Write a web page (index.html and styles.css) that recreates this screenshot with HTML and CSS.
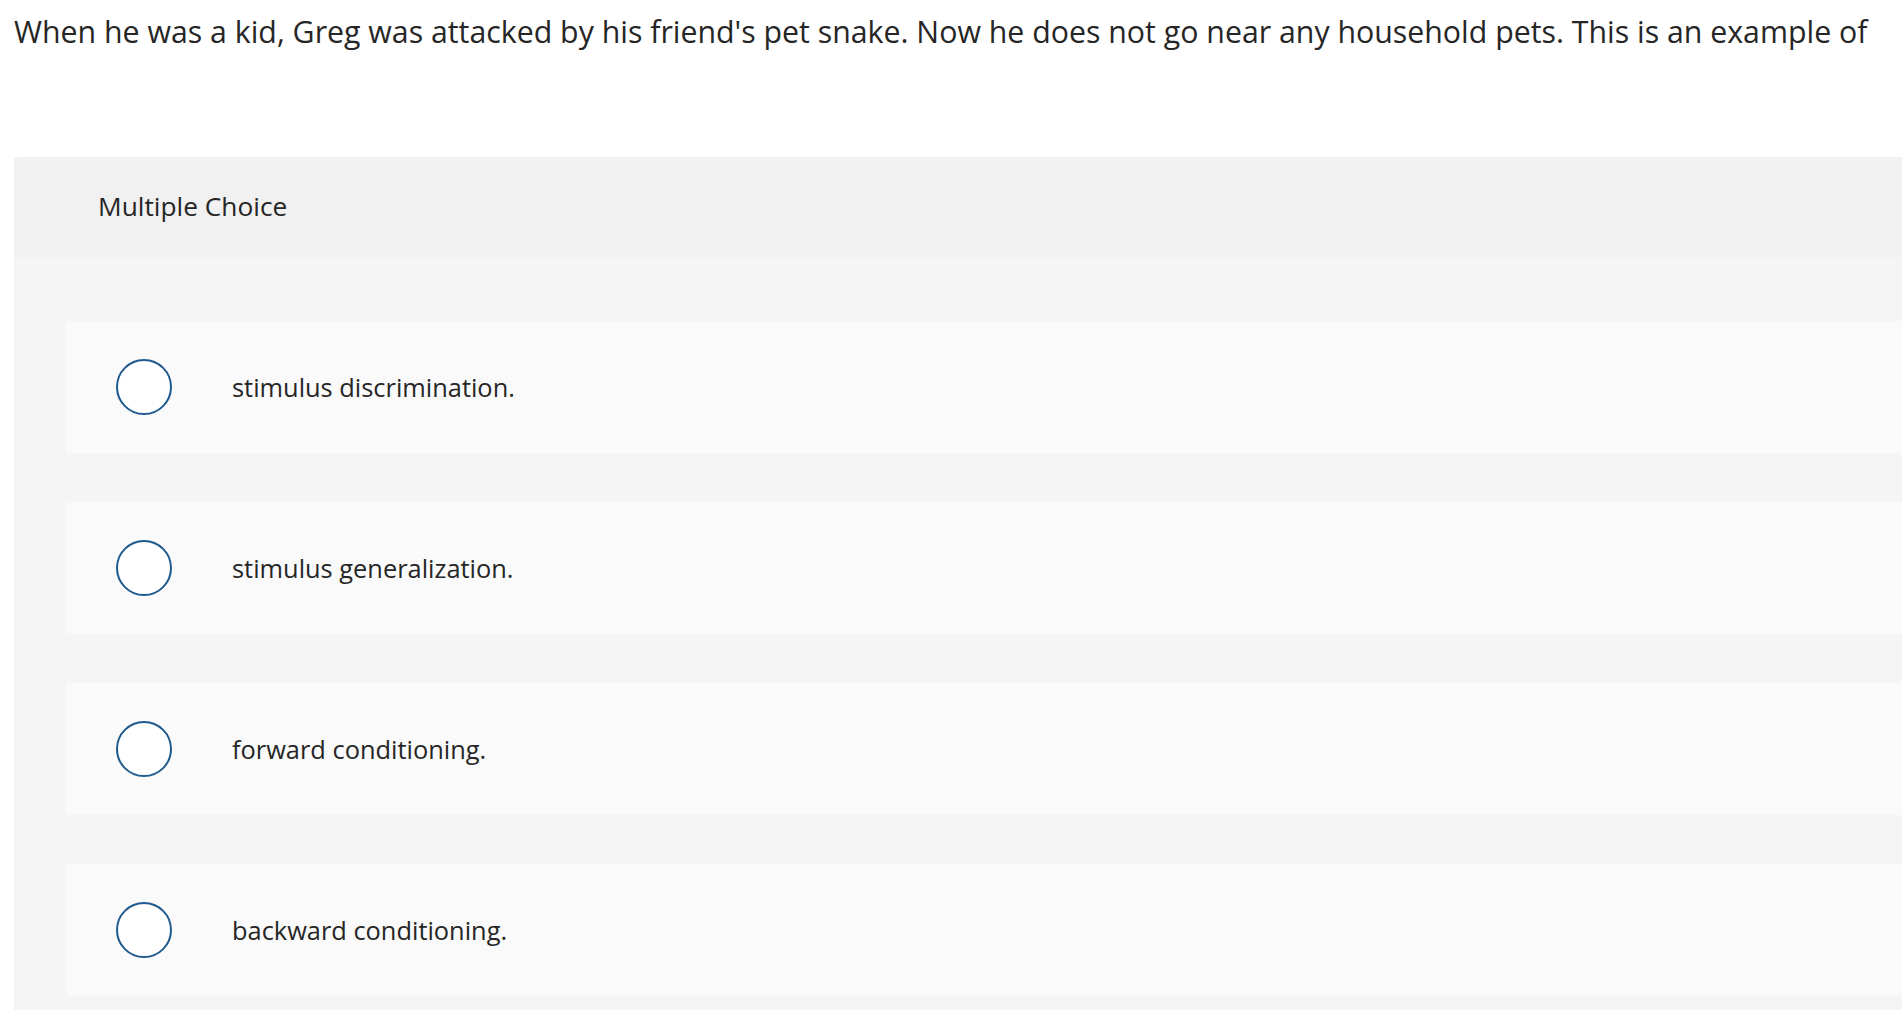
FILE: index.html
```html
<!DOCTYPE html>
<html lang="en">
<head>
<meta charset="utf-8">
<title>Multiple Choice</title>
<link rel="stylesheet" href="styles.css">
</head>
<body>
<p class="question">When he was a kid, Greg was attacked by his friend's pet snake. Now he does not go near any household pets. This is an example of</p>
<section class="panel">
  <div class="panel-head">Multiple Choice</div>
  <div class="panel-body">
    <label class="choice"><span class="radio"></span><span class="label">stimulus discrimination.</span></label>
    <label class="choice"><span class="radio"></span><span class="label">stimulus generalization.</span></label>
    <label class="choice"><span class="radio"></span><span class="label">forward conditioning.</span></label>
    <label class="choice"><span class="radio"></span><span class="label">backward conditioning.</span></label>
  </div>
</section>
</body>
</html>
```
FILE: styles.css
```css
html, body {
  margin: 0;
  padding: 0;
  background: #ffffff;
  overflow: hidden;
}
body {
  font-family: "Open Sans", "Liberation Sans", sans-serif;
  font-variant-ligatures: none;
  color: #262626;
}
.question {
  margin: 0;
  height: 36px;
  padding: 14px 0 0 14px;
  font-size: 30.3px;
  line-height: 1.2;
  white-space: nowrap;
}
.panel {
  margin: 107px 0 0 14px;
  border-radius: 4px 0 0 0;
  overflow: hidden;
}
.panel-head {
  height: 100px;
  background: #f1f1f1;
  display: flex;
  align-items: center;
  padding-left: 84px;
  font-size: 26.3px;
  line-height: 1.2;
}
.panel-body {
  background: #f5f5f5;
  padding: 64px 0 49px 52px;
  display: flex;
  flex-direction: column;
  gap: 49px;
}
.choice {
  height: 132px;
  background: #fafafa;
  border-radius: 4px 0 0 4px;
  display: flex;
  align-items: center;
  padding-left: 50px;
}
.radio {
  width: 56px;
  height: 56px;
  box-sizing: border-box;
  border: 2px solid #1f5a8f;
  border-radius: 50%;
  background: #ffffff;
  flex: none;
}
.label {
  margin-left: 60px;
  font-size: 25.4px;
  line-height: 1.2;
}
```
